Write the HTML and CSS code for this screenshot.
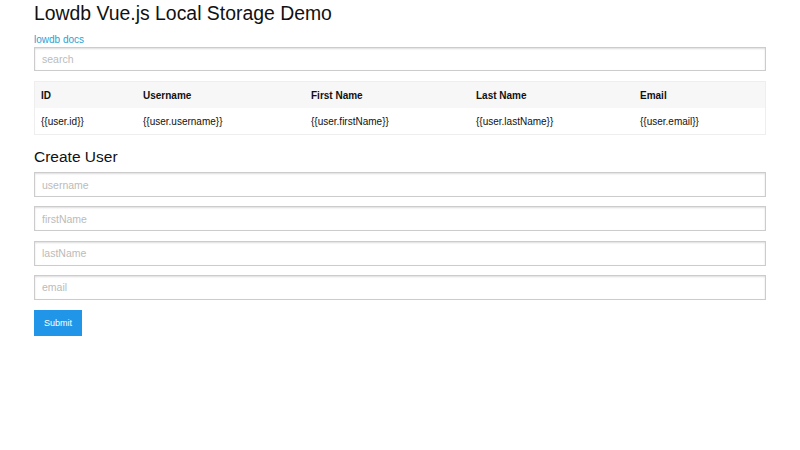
FILE: index.html
```html
<!DOCTYPE html>
<html>
<head>
<meta charset="utf-8">
<link rel="stylesheet" href="styles.css">
</head>
<body>
<div class="container">
  <h1 class="title">Lowdb Vue.js Local Storage Demo</h1>
  <a class="docs" href="#">lowdb docs</a>
  <input class="field search" type="text" placeholder="search">
  <table class="users">
    <colgroup>
      <col class="c-id"><col class="c-user"><col class="c-first"><col class="c-last"><col class="c-email">
    </colgroup>
    <thead>
      <tr><th>ID</th><th>Username</th><th>First Name</th><th>Last Name</th><th>Email</th></tr>
    </thead>
    <tbody>
      <tr><td>{{user.id}}</td><td>{{user.username}}</td><td>{{user.firstName}}</td><td>{{user.lastName}}</td><td>{{user.email}}</td></tr>
    </tbody>
  </table>
  <h2 class="subtitle">Create User</h2>
  <form class="create">
    <input class="field" type="text" placeholder="username">
    <input class="field" type="text" placeholder="firstName">
    <input class="field" type="text" placeholder="lastName">
    <input class="field" type="text" placeholder="email">
    <button class="submit" type="button">Submit</button>
  </form>
</div>
</body>
</html>
```
FILE: styles.css
```css
html, body { margin: 0; padding: 0; background: #fff; }
body { font-family: "Liberation Sans", Arial, sans-serif; color: #111; }
.container { width: 732px; margin: 0 34px; display: flex; flex-direction: column; align-items: flex-start; }
.title { font-size: 19.4px; font-weight: normal; margin: 1px 0 0; line-height: 24px; }
.docs { font-size: 10px; color: #2a9fd6; text-decoration: none; margin-top: 9px; line-height: 12px; }
.field {
  box-sizing: border-box; width: 732px; height: 25px; margin: 0;
  border: 1px solid #ccc; box-shadow: inset 0 1px 2px #ddd;
  padding: 0 7px; font-family: "Liberation Sans", Arial, sans-serif; font-size: 10.5px; color: #333;
  background: #fff; outline: none;
}
.field::placeholder { color: #bbb; }
.search { margin-top: 1px; height: 24px; }
.users { width: 732px; table-layout: fixed; border-collapse: separate; border-spacing: 0; border: 1px solid #eee; margin-top: 10px; font-size: 10px; }
.c-id { width: 102px; }
.c-user { width: 168px; }
.c-first { width: 165px; }
.c-last { width: 164px; }
.users th { background: #f7f7f7; text-align: left; font-weight: bold; height: 26px; padding: 0 7px 0 6px; box-sizing: border-box; }
.users td { text-align: left; height: 26px; padding: 0 7px 0 6px; box-sizing: border-box; }
.subtitle { font-size: 15.5px; font-weight: normal; margin: 12px 0 0; line-height: 20px; }
.create { display: flex; flex-direction: column; gap: 9.3px; margin-top: 5px; align-items: flex-start; }
.submit {
  width: 48px; height: 26px; margin-top: 1px; border: 0; background: #2196e8; color: #fff;
  font-family: "Liberation Sans", Arial, sans-serif; font-size: 9px; padding: 0;
}
```
